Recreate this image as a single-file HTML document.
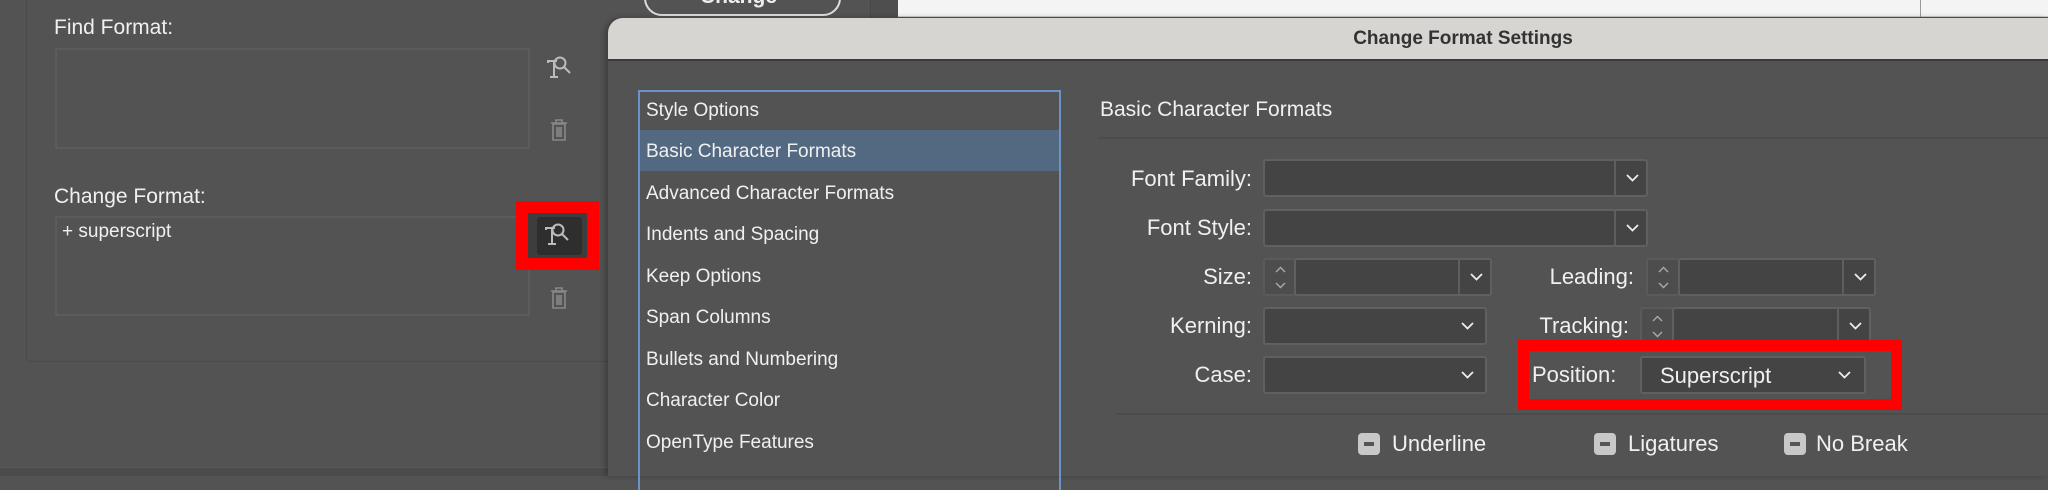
<!DOCTYPE html>
<html><head><meta charset="utf-8"><style>
*{margin:0;padding:0;box-sizing:border-box}
body{width:2048px;height:476px;background:#535353;position:relative;overflow:hidden;font-family:"Liberation Sans",sans-serif;color:#f0f0f0}
.a{position:absolute}
.t{position:absolute;white-space:nowrap;line-height:1}
.fld{position:absolute;background:#444;border:2px solid #606060;border-radius:3px}
.chev{position:absolute;top:0;bottom:0;border-left:2px solid #5e5e5e}
.chev svg,.sp svg{position:absolute}
.sp{position:absolute;background:#4d4d4d;border:2px solid #5a5a5a;border-radius:3px}
.lbl{position:absolute;font-size:22px;text-align:right;white-space:nowrap;line-height:1}
.li{position:absolute;left:646px;font-size:19px;line-height:1;white-space:nowrap}
.cb{position:absolute;width:22px;height:22px;background:#c8c8c8;border-radius:4px}
.cb:after{content:"";position:absolute;left:6px;top:9px;width:10px;height:4px;background:#555}
</style></head><body>
<!-- left panel -->
<div class="a" style="left:26px;top:-5px;width:850px;height:367px;border:1px solid #4a4a4a;border-top:none;border-radius:0 0 4px 4px;"></div>
<div class="a" style="left:870px;top:0;width:28px;height:476px;background:#4e4e4e;border-left:1px solid #484848"></div>
<div class="a" style="left:898px;top:0;width:1150px;height:17px;background:#f4f4f4;border-bottom:1px solid #ccc"></div>
<div class="a" style="left:1920px;top:0;width:1px;height:17px;background:#999"></div>
<div class="a" style="left:0;top:467px;width:870px;height:9px;background:#4b4b4b;border-top:1px solid #5a5a5a"></div>
<div class="a" style="left:644px;top:-20px;width:197px;height:36px;border:2px solid #ddd;border-radius:18px;"></div>
<div class="t" style="left:700px;top:-14px;font-size:21px;font-weight:bold;color:#eee">Change</div>

<div class="t" style="left:54px;top:17px;font-size:21px">Find Format:</div>
<div class="a" style="left:55px;top:48px;width:475px;height:101px;border:2px solid #5c5c5c"></div>
<div class="t" style="left:54px;top:186px;font-size:21px">Change Format:</div>
<div class="a" style="left:55px;top:216px;width:475px;height:100px;border:2px solid #5c5c5c"></div>
<div class="t" style="left:62px;top:222px;font-size:19px">+ superscript</div>

<svg class="a" style="left:546px;top:54px" width="30" height="30" viewBox="0 0 30 30" fill="none" stroke="#bbb" stroke-width="2"><path d="M2 9v-2h9M8 7v16M4 23h8"/><circle cx="14" cy="9" r="5.5"/><path d="M18 13l6 6"/></svg>
<svg class="a" style="left:550px;top:118px" width="18" height="24" viewBox="0 0 18 24" fill="none" stroke="#888" stroke-width="1.6"><path d="M3 6h12v16H3zM1 5h16M6 5V2h6v3M7 9v10M9 9v10M11 9v10"/></svg>
<div class="a" style="left:516px;top:201px;width:83px;height:69px;border:12px solid #f00;background:#3d3d3d"></div>
<div class="a" style="left:537px;top:217px;width:45px;height:38px;background:#2e2e2e;border-radius:3px"></div>
<svg class="a" style="left:544px;top:221px" width="30" height="30" viewBox="0 0 30 30" fill="none" stroke="#bbb" stroke-width="2"><path d="M2 9v-2h9M8 7v16M4 23h8"/><circle cx="14" cy="9" r="5.5"/><path d="M18 13l6 6"/></svg>
<svg class="a" style="left:550px;top:286px" width="18" height="24" viewBox="0 0 18 24" fill="none" stroke="#888" stroke-width="1.6"><path d="M3 6h12v16H3zM1 5h16M6 5V2h6v3M7 9v10M9 9v10M11 9v10"/></svg>

<!-- dialog -->
<div class="a" style="left:608px;top:18px;width:1440px;height:458px;background:#535353;border-radius:15px 0 0 0;overflow:hidden;box-shadow:-3px 0 6px rgba(0,0,0,.25)">
 <div class="a" style="left:0;top:0;width:1440px;height:43px;background:#d6d5d1;border-bottom:2px solid #3c3c3c"></div>
</div>
<div class="t" style="left:1463px;top:29px;transform:translateX(-50%);font-size:19px;font-weight:bold;color:#333">Change Format Settings</div>

<div class="a" style="left:638px;top:90px;width:423px;height:400px;border:2px solid #6b93c8;border-bottom:none"></div>
<div class="a" style="left:640px;top:130px;width:419px;height:41px;background:#536982"></div>
<div class="li" style="top:101px">Style Options</div>
<div class="li" style="top:142px">Basic Character Formats</div>
<div class="li" style="top:184px">Advanced Character Formats</div>
<div class="li" style="top:225px">Indents and Spacing</div>
<div class="li" style="top:267px">Keep Options</div>
<div class="li" style="top:308px">Span Columns</div>
<div class="li" style="top:350px">Bullets and Numbering</div>
<div class="li" style="top:391px">Character Color</div>
<div class="li" style="top:433px">OpenType Features</div>

<div class="t" style="left:1100px;top:99px;font-size:21px">Basic Character Formats</div>
<div class="a" style="left:1098px;top:137px;width:950px;height:2px;background:#4c4c4c"></div>
<div class="a" style="left:1117px;top:413px;width:931px;height:2px;background:#4c4c4c"></div>

<div class="lbl" style="right:796px;top:168px">Font Family:</div>
<div class="fld" style="left:1263px;top:159px;width:385px;height:38px"><div class="chev" style="left:349px;width:34px"><svg style="left:10px;top:13px" width="13" height="8"><path d="M1 1l5.5 5.5L12 1" stroke="#eee" stroke-width="1.8" fill="none"/></svg></div></div>
<div class="lbl" style="right:796px;top:217px">Font Style:</div>
<div class="fld" style="left:1263px;top:209px;width:385px;height:38px"><div class="chev" style="left:349px;width:34px"><svg style="left:10px;top:13px" width="13" height="8"><path d="M1 1l5.5 5.5L12 1" stroke="#eee" stroke-width="1.8" fill="none"/></svg></div></div>

<div class="lbl" style="right:796px;top:266px">Size:</div>
<div class="sp" style="left:1263px;top:258px;width:33px;height:38px"><svg style="left:9px;top:5px" width="13" height="26" fill="none" stroke="#aaa" stroke-width="1.4"><path d="M2 7l4.5-4.5L11 7M2 18l4.5 4.5L11 18"/></svg></div>
<div class="fld" style="left:1294px;top:258px;width:198px;height:38px"><div class="chev" style="left:162px;width:34px"><svg style="left:10px;top:13px" width="13" height="8"><path d="M1 1l5.5 5.5L12 1" stroke="#eee" stroke-width="1.8" fill="none"/></svg></div></div>
<div class="lbl" style="right:414px;top:266px">Leading:</div>
<div class="sp" style="left:1646px;top:258px;width:34px;height:38px"><svg style="left:9px;top:5px" width="13" height="26" fill="none" stroke="#aaa" stroke-width="1.4"><path d="M2 7l4.5-4.5L11 7M2 18l4.5 4.5L11 18"/></svg></div>
<div class="fld" style="left:1678px;top:258px;width:198px;height:38px"><div class="chev" style="left:162px;width:34px"><svg style="left:10px;top:13px" width="13" height="8"><path d="M1 1l5.5 5.5L12 1" stroke="#eee" stroke-width="1.8" fill="none"/></svg></div></div>

<div class="lbl" style="right:796px;top:315px">Kerning:</div>
<div class="fld" style="left:1263px;top:307px;width:224px;height:38px"><svg class="a" style="left:196px;top:13px" width="13" height="8"><path d="M1 1l5.5 5.5L12 1" stroke="#eee" stroke-width="1.8" fill="none"/></svg></div>
<div class="lbl" style="right:419px;top:315px">Tracking:</div>
<div class="sp" style="left:1640px;top:307px;width:34px;height:38px"><svg style="left:9px;top:5px" width="13" height="26" fill="none" stroke="#aaa" stroke-width="1.4"><path d="M2 7l4.5-4.5L11 7M2 18l4.5 4.5L11 18"/></svg></div>
<div class="fld" style="left:1672px;top:307px;width:199px;height:38px"><div class="chev" style="left:163px;width:34px"><svg style="left:10px;top:13px" width="13" height="8"><path d="M1 1l5.5 5.5L12 1" stroke="#eee" stroke-width="1.8" fill="none"/></svg></div></div>

<div class="lbl" style="right:796px;top:364px">Case:</div>
<div class="fld" style="left:1263px;top:356px;width:224px;height:38px"><svg class="a" style="left:196px;top:13px" width="13" height="8"><path d="M1 1l5.5 5.5L12 1" stroke="#eee" stroke-width="1.8" fill="none"/></svg></div>

<div class="a" style="left:1518px;top:340px;width:384px;height:70px;border:11px solid #f00"></div>
<div class="lbl" style="left:1532px;top:364px">Position:</div>
<div class="fld" style="left:1640px;top:356px;width:226px;height:38px"><span class="t" style="left:18px;top:7px;font-size:22px">Superscript</span><svg class="a" style="left:196px;top:13px" width="13" height="8"><path d="M1 1l5.5 5.5L12 1" stroke="#eee" stroke-width="1.8" fill="none"/></svg></div>

<div class="cb" style="left:1358px;top:433px"></div>
<div class="t" style="left:1392px;top:433px;font-size:22px">Underline</div>
<div class="cb" style="left:1594px;top:433px"></div>
<div class="t" style="left:1628px;top:433px;font-size:22px">Ligatures</div>
<div class="cb" style="left:1784px;top:433px"></div>
<div class="t" style="left:1816px;top:433px;font-size:22px">No Break</div>
</body></html>
